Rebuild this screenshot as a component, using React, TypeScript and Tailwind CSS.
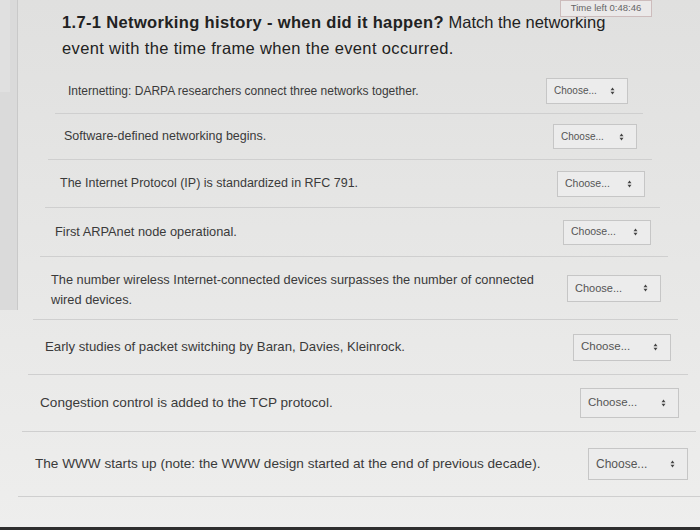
import React from 'react';

interface Row {
  text: string;
  divLeft: number;
  textPad: number;
  selWidth: number;
  selHeight: number;
  padRight: number;
  marginRight: number;
  height: number;
  wrap?: boolean;
}

// offsets follow the camera angle of the original photo
const rows: Row[] = [
  { text: 'Internetting: DARPA researchers connect three networks together.', divLeft: 37, textPad: 13, selWidth: 82, selHeight: 26, padRight: 15, marginRight: 57, height: 46 },
  { text: 'Software-defined networking begins.', divLeft: 30, textPad: 16, selWidth: 84, selHeight: 25, padRight: 15, marginRight: 48, height: 46 },
  { text: 'The Internet Protocol (IP) is standardized in RFC 791.', divLeft: 27, textPad: 15, selWidth: 88, selHeight: 26, padRight: 15, marginRight: 40, height: 48 },
  { text: 'First ARPAnet node operational.', divLeft: 22, textPad: 15, selWidth: 88, selHeight: 25, padRight: 17, marginRight: 32, height: 49 },
  { text: 'The number wireless Internet-connected devices surpasses the number of connected wired devices.', divLeft: 15, textPad: 18, selWidth: 94, selHeight: 27, padRight: 17, marginRight: 22, height: 63, wrap: true },
  { text: 'Early studies of packet switching by Baran, Davies, Kleinrock.', divLeft: 10, textPad: 17, selWidth: 98, selHeight: 27, padRight: 17, marginRight: 12, height: 55 },
  { text: 'Congestion control is added to the TCP protocol.', divLeft: 4, textPad: 18, selWidth: 99, selHeight: 30, padRight: 17, marginRight: 4, height: 57 },
  { text: 'The WWW starts up (note: the WWW design started at the end of previous decade).', divLeft: 0, textPad: 17, selWidth: 100, selHeight: 32, padRight: 12, marginRight: 0, height: 65 },
];

const fontSizes = ['text-[12px]', 'text-[12.5px]', 'text-[12.5px]', 'text-[12.8px]', 'text-[12.8px]', 'text-[13.2px]', 'text-[13.6px]', 'text-[13.6px]'];
const selFonts = ['text-[10px]', 'text-[10px]', 'text-[10.5px]', 'text-[10.5px]', 'text-[11px]', 'text-[11.5px]', 'text-[11.5px]', 'text-[12px]'];

const Arrows: React.FC = () => (
  <svg width="5" height="8" viewBox="0 0 5 8" className="text-[#444]">
    <path d="M2.5 0.5 L4.5 3.2 H0.5 Z" fill="currentColor" />
    <path d="M2.5 7.5 L4.5 4.8 H0.5 Z" fill="currentColor" />
  </svg>
);

const App: React.FC = () => {
  return (
    <div className="w-[700px] h-[530px] overflow-hidden flex flex-col bg-gradient-to-b from-[#e0e0df] via-[#e7e7e6] to-[#eeeeed] font-['Liberation_Sans',Arial,sans-serif]">
      <div className="flex flex-1">
        {/* left edge of the browser frame */}
        <div className="w-[18px] h-[310px] shrink-0 bg-[#dadada] border-r border-[#c9c9c9]">
          <div className="w-[10px] h-[92px] bg-[#e0e0e0]" />
        </div>

        <div className="relative flex-1 pt-[9px]">
          {/* Timer */}
          <div className="absolute top-0 left-[542px] h-[17px] w-[92px] flex items-center justify-center bg-[#ebe9e9] border border-[#cdbcbc] text-[9.5px] text-[#666]">
            Time left 0:48:46
          </div>

          {/* Question title */}
          <div className="ml-[44px] w-[600px] text-[16.5px] tracking-[0.35px] leading-[26px] text-[#222]">
            <span className="font-bold">1.7-1 Networking history - when did it happen?</span>
            <span className="tracking-normal"> Match the networking</span>
            <br />
            event with the time frame when the event occurred.
          </div>

          <div className="mt-[7px]">
            {rows.map((row, i) => (
              <div
                key={i}
                className="flex items-center border-b border-[#cfcfcf]"
                style={{ marginLeft: row.divLeft, marginRight: row.marginRight, height: row.height, paddingLeft: row.textPad, paddingRight: row.padRight }}
              >
                <div className={`flex-1 ${fontSizes[i]} text-[#3a3a3a] ${row.wrap ? 'leading-[20px] max-w-[492px] pt-[4px]' : ''}`}>
                  {row.text}
                </div>
                <div
                  className={`ml-auto shrink-0 flex items-center justify-between pl-[7px] pr-[12px] bg-[#ececec] border border-[#c6c6c6] text-[#555] ${selFonts[i]}`}
                  style={{ width: row.selWidth, height: row.selHeight }}
                >
                  <span>Choose...</span>
                  <Arrows />
                </div>
              </div>
            ))}
          </div>
        </div>
      </div>
      <div className="h-[3px] bg-[#2e2e2e]" />
    </div>
  );
};

export default App;
